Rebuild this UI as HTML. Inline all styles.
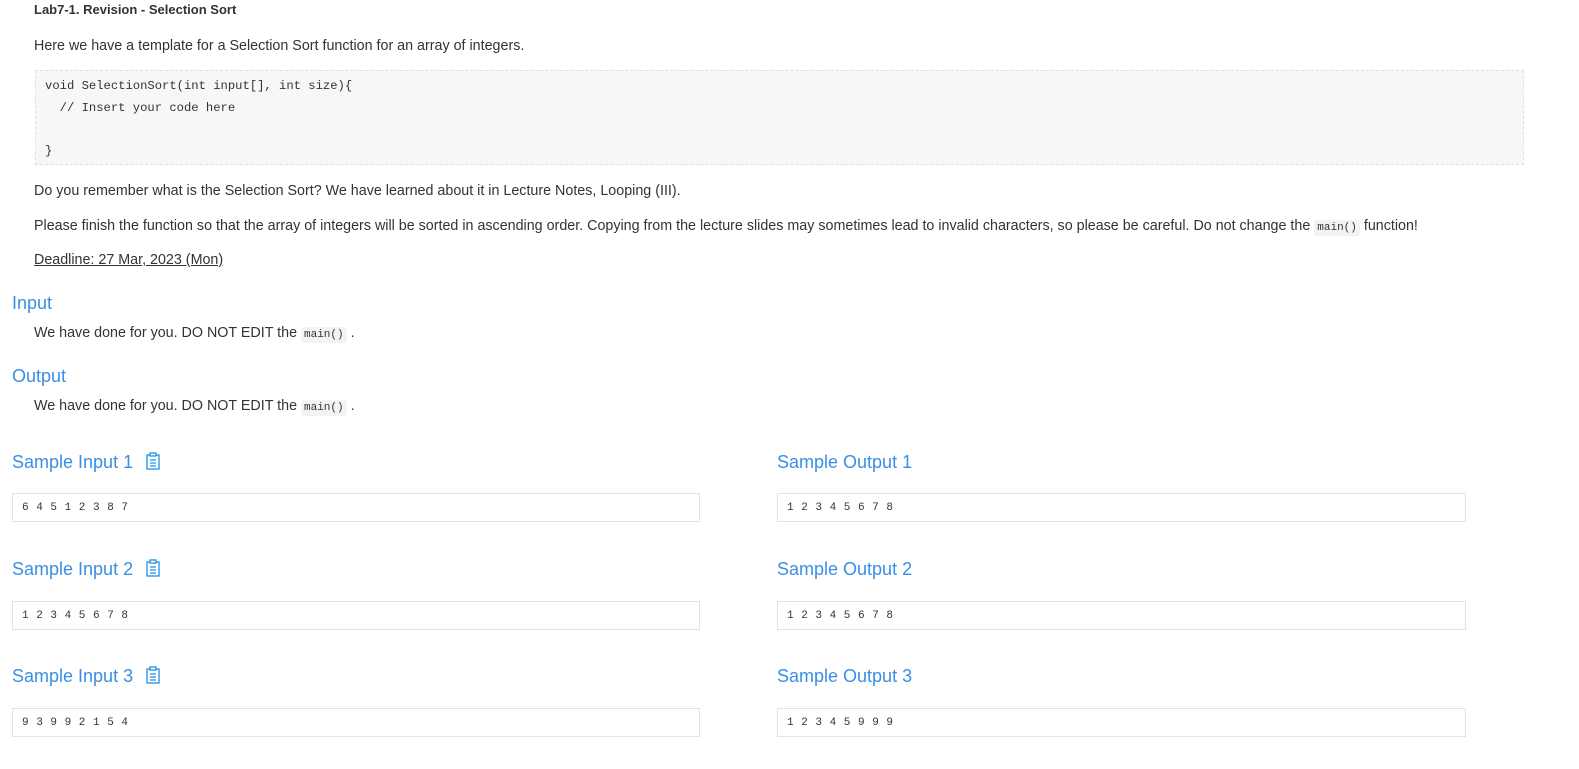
<!DOCTYPE html>
<html><head><style>
body{margin:0;background:#fff;font-family:"Liberation Sans",sans-serif;color:#333;font-size:14.3px;}
.abs{position:absolute;white-space:nowrap;}
code{font-family:"Liberation Mono",monospace;font-size:11px;background:#f3f3f3;border-radius:3px;padding:2px 3px;color:#333;}
.h{color:#3a8ee6;font-size:18px;}
.box{position:absolute;border:1px solid #e3e3e3;height:29px;box-sizing:border-box;font-family:"Liberation Mono",monospace;font-size:11px;line-height:28px;padding-left:9px;color:#333;letter-spacing:0.5px;}
.ic{display:inline-block;vertical-align:-2px;margin-left:13px;}
</style></head><body>
<div class="abs" style="left:34px;top:2px;font-weight:bold;font-size:13px;">Lab7-1. Revision - Selection Sort</div>
<div class="abs" style="left:34px;top:38px;">Here we have a template for a Selection Sort function for an array of integers.</div>
<div style="position:absolute;left:35px;top:70px;width:1489px;height:95px;background:#f7f7f7;border:1px dashed #e0e0e0;box-sizing:border-box;font-family:'Liberation Mono',monospace;font-size:12.2px;color:#333;">
<div class="abs" style="left:9px;top:8px;">void SelectionSort(int input[], int size){</div>
<div class="abs" style="left:9px;top:30px;">&nbsp;&nbsp;// Insert your code here</div>
<div class="abs" style="left:9px;top:73px;">}</div>
</div>
<div class="abs" style="left:34px;top:183px;">Do you remember what is the Selection Sort? We have learned about it in Lecture Notes, Looping (III).</div>
<div class="abs" style="left:34px;top:218px;">Please finish the function so that the array of integers will be sorted in ascending order. Copying from the lecture slides may sometimes lead to invalid characters, so please be careful. Do not change the <code>main()</code> function!</div>
<div class="abs" style="left:34px;top:252px;text-decoration:underline;">Deadline: 27 Mar, 2023 (Mon)</div>
<div class="abs h" style="left:12px;top:293px;">Input</div>
<div class="abs" style="left:34px;top:325px;">We have done for you. DO NOT EDIT the <code>main()</code> .</div>
<div class="abs h" style="left:12px;top:366px;">Output</div>
<div class="abs" style="left:34px;top:398px;">We have done for you. DO NOT EDIT the <code>main()</code> .</div>

<div class="abs h" style="left:12px;top:452px;">Sample Input 1<svg class="ic" width="14" height="18" viewBox="0 0 14 18" fill="none" stroke="#1e90e6" stroke-width="1.3"><rect x="1" y="3" width="12" height="14"/><rect x="4" y="1" width="6" height="3" fill="#fff"/><path d="M4 8h6M4 11h6M4 14h6"/></svg></div>
<div class="abs h" style="left:777px;top:452px;">Sample Output 1</div>
<div class="box" style="left:12px;top:493px;width:688px;">6 4 5 1 2 3 8 7</div>
<div class="box" style="left:777px;top:493px;width:689px;">1 2 3 4 5 6 7 8</div>

<div class="abs h" style="left:12px;top:559px;">Sample Input 2<svg class="ic" width="14" height="18" viewBox="0 0 14 18" fill="none" stroke="#1e90e6" stroke-width="1.3"><rect x="1" y="3" width="12" height="14"/><rect x="4" y="1" width="6" height="3" fill="#fff"/><path d="M4 8h6M4 11h6M4 14h6"/></svg></div>
<div class="abs h" style="left:777px;top:559px;">Sample Output 2</div>
<div class="box" style="left:12px;top:601px;width:688px;">1 2 3 4 5 6 7 8</div>
<div class="box" style="left:777px;top:601px;width:689px;">1 2 3 4 5 6 7 8</div>

<div class="abs h" style="left:12px;top:666px;">Sample Input 3<svg class="ic" width="14" height="18" viewBox="0 0 14 18" fill="none" stroke="#1e90e6" stroke-width="1.3"><rect x="1" y="3" width="12" height="14"/><rect x="4" y="1" width="6" height="3" fill="#fff"/><path d="M4 8h6M4 11h6M4 14h6"/></svg></div>
<div class="abs h" style="left:777px;top:666px;">Sample Output 3</div>
<div class="box" style="left:12px;top:708px;width:688px;">9 3 9 9 2 1 5 4</div>
<div class="box" style="left:777px;top:708px;width:689px;">1 2 3 4 5 9 9 9</div>
</body></html>
